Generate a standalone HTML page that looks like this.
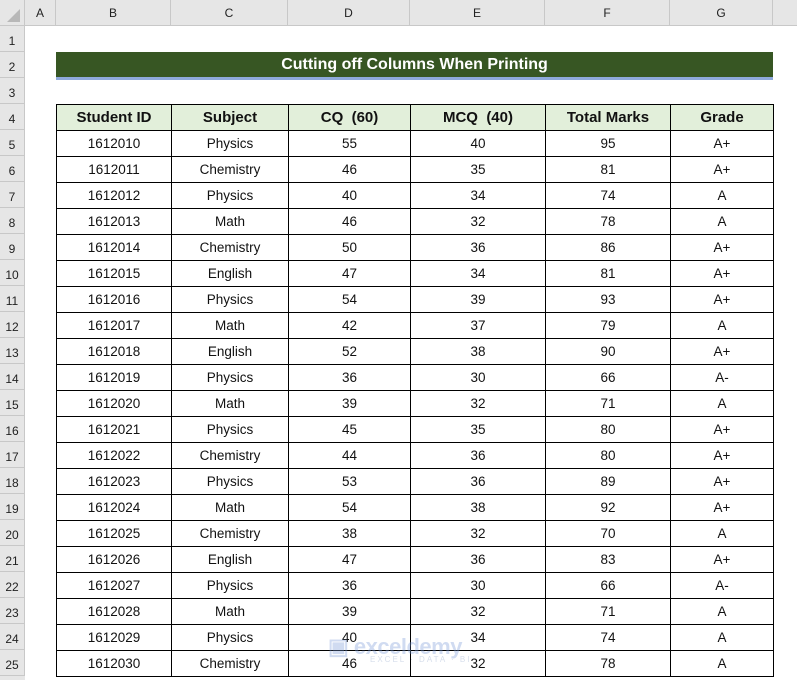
<!DOCTYPE html>
<html><head><meta charset="utf-8"><style>
*{margin:0;padding:0;box-sizing:border-box}
body{width:797px;height:680px;overflow:hidden;background:#fff;font-family:"Liberation Sans",Calibri,sans-serif;position:relative}
.ch{position:absolute;top:0;height:26px;background:#e6e6e6;border-right:1px solid #c8c8c8;border-bottom:1px solid #c8c8c8;font-size:12px;color:#222;text-align:center;line-height:26px}
.rh{position:absolute;left:0;width:25px;height:26px;background:#e6e6e6;border-bottom:1px solid #c8c8c8;border-right:1px solid #c8c8c8;font-size:12px;color:#222;text-align:center;line-height:30px}
table{position:absolute;left:56px;top:104px;border-collapse:collapse;table-layout:fixed}
td{border:1px solid #000;height:26px;text-align:center;font-size:13.5px;color:#111;padding:0}
tr.h td{background:#e2efda;font-weight:bold;font-size:15px}
</style></head><body>
<div class="ch" style="left:0;width:25px"><svg width="25" height="26"><polygon points="20,9 20,22 7,22" fill="#b8b8b8"/></svg></div>
<div class="ch" style="left:25px;width:31px">A</div>
<div class="ch" style="left:56px;width:115px">B</div>
<div class="ch" style="left:171px;width:117px">C</div>
<div class="ch" style="left:288px;width:122px">D</div>
<div class="ch" style="left:410px;width:135px">E</div>
<div class="ch" style="left:545px;width:125px">F</div>
<div class="ch" style="left:670px;width:103px">G</div>
<div class="ch" style="left:773px;width:24px;border-right:none"></div>
<div style="position:absolute;left:56px;top:52px;width:717px;height:25px;background:#375623;color:#fff;font-weight:bold;font-size:16px;text-align:center;line-height:26px">Cutting off Columns When Printing</div>
<div style="position:absolute;left:56px;top:77px;width:717px;height:3px;background:#8ea9db"></div>
<table>
<colgroup><col style="width:115px"><col style="width:117px"><col style="width:122px"><col style="width:135px"><col style="width:125px"><col style="width:103px"></colgroup>
<tr class="h"><td>Student ID</td><td>Subject</td><td>CQ &nbsp;(60)</td><td>MCQ &nbsp;(40)</td><td>Total Marks</td><td>Grade</td></tr>
<tr><td>1612010</td><td>Physics</td><td>55</td><td>40</td><td>95</td><td>A+</td></tr>
<tr><td>1612011</td><td>Chemistry</td><td>46</td><td>35</td><td>81</td><td>A+</td></tr>
<tr><td>1612012</td><td>Physics</td><td>40</td><td>34</td><td>74</td><td>A</td></tr>
<tr><td>1612013</td><td>Math</td><td>46</td><td>32</td><td>78</td><td>A</td></tr>
<tr><td>1612014</td><td>Chemistry</td><td>50</td><td>36</td><td>86</td><td>A+</td></tr>
<tr><td>1612015</td><td>English</td><td>47</td><td>34</td><td>81</td><td>A+</td></tr>
<tr><td>1612016</td><td>Physics</td><td>54</td><td>39</td><td>93</td><td>A+</td></tr>
<tr><td>1612017</td><td>Math</td><td>42</td><td>37</td><td>79</td><td>A</td></tr>
<tr><td>1612018</td><td>English</td><td>52</td><td>38</td><td>90</td><td>A+</td></tr>
<tr><td>1612019</td><td>Physics</td><td>36</td><td>30</td><td>66</td><td>A-</td></tr>
<tr><td>1612020</td><td>Math</td><td>39</td><td>32</td><td>71</td><td>A</td></tr>
<tr><td>1612021</td><td>Physics</td><td>45</td><td>35</td><td>80</td><td>A+</td></tr>
<tr><td>1612022</td><td>Chemistry</td><td>44</td><td>36</td><td>80</td><td>A+</td></tr>
<tr><td>1612023</td><td>Physics</td><td>53</td><td>36</td><td>89</td><td>A+</td></tr>
<tr><td>1612024</td><td>Math</td><td>54</td><td>38</td><td>92</td><td>A+</td></tr>
<tr><td>1612025</td><td>Chemistry</td><td>38</td><td>32</td><td>70</td><td>A</td></tr>
<tr><td>1612026</td><td>English</td><td>47</td><td>36</td><td>83</td><td>A+</td></tr>
<tr><td>1612027</td><td>Physics</td><td>36</td><td>30</td><td>66</td><td>A-</td></tr>
<tr><td>1612028</td><td>Math</td><td>39</td><td>32</td><td>71</td><td>A</td></tr>
<tr><td>1612029</td><td>Physics</td><td>40</td><td>34</td><td>74</td><td>A</td></tr>
<tr><td>1612030</td><td>Chemistry</td><td>46</td><td>32</td><td>78</td><td>A</td></tr>
</table>
<div class="rh" style="top:26px">1</div><div class="rh" style="top:52px">2</div><div class="rh" style="top:78px">3</div><div class="rh" style="top:104px">4</div><div class="rh" style="top:130px">5</div><div class="rh" style="top:156px">6</div><div class="rh" style="top:182px">7</div><div class="rh" style="top:208px">8</div><div class="rh" style="top:234px">9</div><div class="rh" style="top:260px">10</div><div class="rh" style="top:286px">11</div><div class="rh" style="top:312px">12</div><div class="rh" style="top:338px">13</div><div class="rh" style="top:364px">14</div><div class="rh" style="top:390px">15</div><div class="rh" style="top:416px">16</div><div class="rh" style="top:442px">17</div><div class="rh" style="top:468px">18</div><div class="rh" style="top:494px">19</div><div class="rh" style="top:520px">20</div><div class="rh" style="top:546px">21</div><div class="rh" style="top:572px">22</div><div class="rh" style="top:598px">23</div><div class="rh" style="top:624px">24</div><div class="rh" style="top:650px">25</div>
<div class="rh" style="top:676px;height:4px;border:none"></div>
<div style="position:absolute;left:328px;top:634px;opacity:.35;color:#7a9ad8;font-weight:bold;font-size:22px;letter-spacing:-0.5px">&#9635; exceldemy</div>
<div style="position:absolute;left:370px;top:655px;opacity:.35;color:#8aa0c8;font-size:8px;letter-spacing:2px">EXCEL · DATA · BI</div>
</body></html>
